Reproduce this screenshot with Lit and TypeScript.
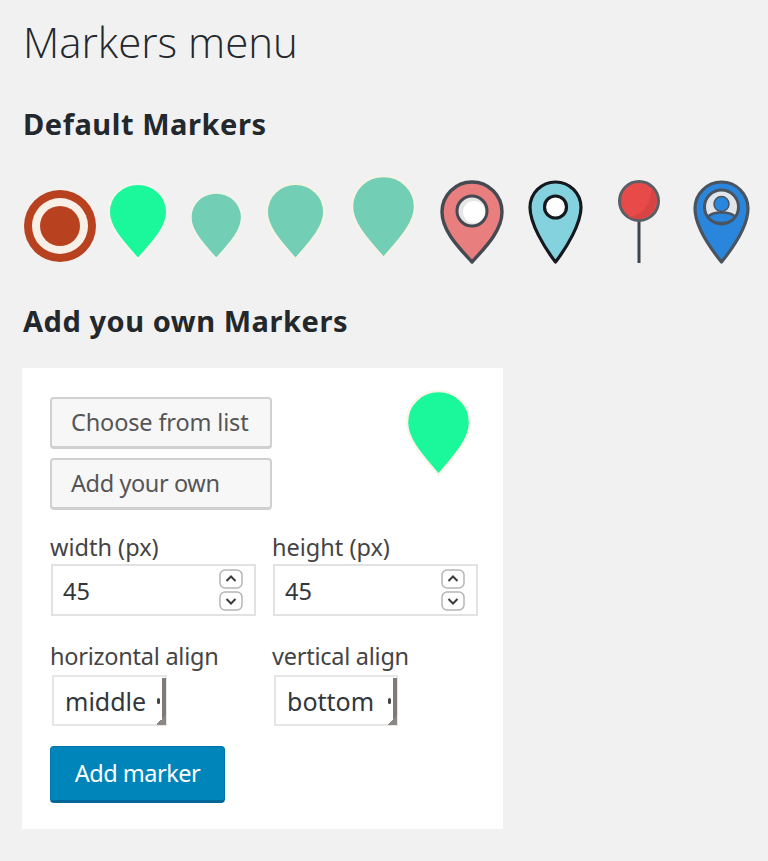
import { LitElement, html, css, svg } from "lit";
import { customElement } from "lit/decorators.js";

const DROP = "M29 75C18 62 0 45 0 28C0 12 13 0 29 0C45 0 58 12 58 28C58 45 40 62 29 75Z";

const pinPath = (w: number, h: number) => {
  const cx = w / 2, r = w / 2 - 2, cy = r + 2;
  return `M${cx} ${h - 2}C${cx - r * 0.45} ${h * 0.8} 2 ${cy + r * 0.62} 2 ${cy}A${r} ${r} 0 0 1 ${w - 2} ${cy}C${w - 2} ${cy + r * 0.62} ${cx + r * 0.45} ${h * 0.8} ${cx} ${h - 2}Z`;
};

const drop = (fill: string, halo: string) => svg`<svg viewBox="-2 -2 62 79" width="100%" height="100%" preserveAspectRatio="none"><path d=${DROP} fill=${fill} stroke=${halo} stroke-width="2"/></svg>`;

const markers = [
  { w: 72, h: 72, top: 14, left: 0, icon: svg`<svg viewBox="0 0 72 72" width="72" height="72"><circle cx="36" cy="36" r="36" fill="#b8421f"/><circle cx="36" cy="36" r="28" fill="#f8efe6"/><circle cx="36" cy="36" r="20" fill="#b8421f"/></svg>` },
  { w: 62, h: 79, top: 6, left: 11, icon: drop("#1bf79b", "#f3f6ee") },
  { w: 54.5, h: 69.5, top: 15, left: 20, icon: drop("#72cfb5", "#f4f3ec") },
  { w: 61, h: 79, top: 6, left: 21, icon: drop("#72cfb5", "#f7f3e4") },
  { w: 67, h: 86, top: -2, left: 24, icon: drop("#72cfb5", "#f7f3e4") },
  { w: 64, h: 84, top: 4, left: 23, icon: svg`<svg viewBox="0 0 64 84" width="64" height="84"><path d=${pinPath(64, 84)} fill="#e87e7e" stroke="#454a52" stroke-width="3.4" stroke-linejoin="round"/><circle cx="32" cy="31" r="15" fill="#e6e6e6" stroke="#454a52" stroke-width="3"/><circle cx="34" cy="32" r="11" fill="#fff"/></svg>` },
  { w: 55, h: 84, top: 4, left: 24, icon: svg`<svg viewBox="0 0 55 84" width="55" height="84"><path d=${pinPath(55, 84)} fill="#84d2de" stroke="#15191e" stroke-width="3.2" stroke-linejoin="round"/><circle cx="27.5" cy="27" r="11" fill="#fff" stroke="#15191e" stroke-width="3.2"/></svg>` },
  { w: 44, h: 84, top: 4, left: 34, icon: svg`<svg viewBox="0 0 44 84" width="44" height="84"><line x1="22" y1="40" x2="22" y2="83" stroke="#3d4650" stroke-width="3"/><circle cx="22" cy="21" r="19.5" fill="#e84a4a" stroke="#5a5f66" stroke-width="3"/><path d="M35 8A19 19 0 0 1 10 36C22 38 33 28 35 8Z" fill="#d64544"/></svg>` },
  { w: 57, h: 84, top: 4, left: 32, icon: svg`<svg viewBox="0 0 57 84" width="57" height="84"><path d=${pinPath(57, 84)} fill="#2a86dc" stroke="#4a5460" stroke-width="3.2" stroke-linejoin="round"/><circle cx="28.5" cy="27" r="17" fill="#dfe5ea" stroke="#4a5460" stroke-width="3"/><circle cx="28.5" cy="24" r="7.5" fill="#2a86dc" stroke="#4a5460" stroke-width="1.5"/><path d="M15 37C19 31 38 31 42 37C36 45 21 45 15 37Z" fill="#2a86dc" stroke="#4a5460" stroke-width="2.5"/></svg>` },
];

const FONT = css`"Noto Sans", "Open Sans", sans-serif`;

@customElement("app-root")
export class AppRoot extends LitElement {
  static styles = css`
    :host { display: block; width: 768px; height: 861px; background: #f1f1f1; font-family: ${FONT}; color: #23282d; overflow: hidden; }
    .page { padding: 14px 0 0 23px; display: flex; flex-direction: column; }
    h1 { margin: 0; font-size: 42px; line-height: 56px; font-weight: 300; font-family: "Open Sans", sans-serif; }
    h2 { margin: 0; font-size: 29px; line-height: 38px; font-weight: 700; letter-spacing: .55px; }
    h2.first { margin-top: 35px; }
    h2.second { margin-top: 24px; }
    .markers { display: flex; align-items: flex-start; height: 102px; margin: 33px 0 0 1px; }
    .marker { flex: none; line-height: 0; }
    .card { width: 481px; height: 461px; margin: 28px 0 0 -1px; background: #fff; box-sizing: border-box; padding: 29px 0 0 28px; position: relative; color: #444; font-size: 23.5px; }
    .own { position: absolute; left: 383px; top: 21px; width: 67px; height: 88px; }
    .btn { width: 222px; height: 52px; box-sizing: border-box; border: 2px solid #d0d0d0; border-bottom-width: 3px; border-radius: 4px; background: #f7f7f7; color: #555; padding-left: 19px; display: flex; align-items: center; line-height: 1; margin-bottom: 9px; letter-spacing: -.15px; white-space: nowrap; }
    .btn.own-btn { letter-spacing: -.4px; }
    .fields { display: grid; grid-template-columns: 222px 222px; margin-top: 21px; }
    .fields.sel { margin-top: 24px; }
    .sel label { height: 35px; letter-spacing: -.25px; }
    label { display: block; line-height: 32px; height: 33px; white-space: nowrap; }
    .num { width: 205px; height: 52px; margin-left: 1px; box-sizing: border-box; border: 2px solid #e2e2e2; background: #fff; display: flex; align-items: center; justify-content: space-between; padding: 2px 1px 0 10px; color: #32373c; }
    .spin { display: flex; flex-direction: column; gap: 2px; margin: -2px 10px 0 0; }
    .spin svg { display: block; }
    .select { height: 51px; margin-left: 2px; box-sizing: border-box; border: 2px solid #e6e6e6; background: #fff; display: flex; align-items: center; padding-left: 11px; color: #32373c; position: relative; font-size: 25px; }
    .select.a { width: 115px; }
    .select.b { width: 124px; }
    .select::after { content: ""; position: absolute; right: -1px; top: 1px; bottom: -1px; width: 11px; background: linear-gradient(135deg, transparent 50%, #8a8785 50%) bottom right / 11px 9px no-repeat, linear-gradient(#7d7a78, #7d7a78) right / 4px 100% no-repeat; }
    .select::before { content: ""; position: absolute; right: 5px; top: 21px; width: 3px; height: 6px; border-radius: 2px; background: #444; }
    .primary { width: 175px; height: 57px; margin-top: 20px; box-sizing: border-box; background: #0085ba; border: 1px solid #0073aa; border-bottom: 3px solid #006799; border-radius: 4px; color: #fff; display: flex; align-items: center; justify-content: center; line-height: 1; letter-spacing: -.5px; }
  `;

  private spin() {
    return html`<div class="spin">
      <svg width="24" height="20" viewBox="0 0 24 20"><rect x="1" y="1" width="22" height="18" rx="5" fill="#fff" stroke="#b5b5b5" stroke-width="1.5"/><path d="M7.5 12L12 7.5L16.5 12" fill="none" stroke="#3b3b3b" stroke-width="2"/></svg>
      <svg width="24" height="20" viewBox="0 0 24 20"><rect x="1" y="1" width="22" height="18" rx="5" fill="#fff" stroke="#b5b5b5" stroke-width="1.5"/><path d="M7.5 8L12 12.5L16.5 8" fill="none" stroke="#3b3b3b" stroke-width="2"/></svg>
    </div>`;
  }

  render() {
    return html`<div class="page">
      <h1>Markers menu</h1>
      <h2 class="first">Default Markers</h2>
      <div class="markers">
        ${markers.map(m => html`<div class="marker" style="width:${m.w}px;height:${m.h}px;margin-top:${m.top}px;margin-left:${m.left}px">${m.icon}</div>`)}
      </div>
      <h2 class="second">Add you own Markers</h2>
      <div class="card">
        <div class="own">${drop("#1bf79b", "#f8f6e6")}</div>
        <div class="btn">Choose from list</div>
        <div class="btn own-btn">Add your own</div>
        <div class="fields">
          <div><label>width (px)</label><div class="num"><span>45</span>${this.spin()}</div></div>
          <div><label>height (px)</label><div class="num"><span>45</span>${this.spin()}</div></div>
        </div>
        <div class="fields sel">
          <div><label>horizontal align</label><div class="select a">middle</div></div>
          <div><label>vertical align</label><div class="select b">bottom</div></div>
        </div>
        <div class="primary">Add marker</div>
      </div>
    </div>`;
  }
}
